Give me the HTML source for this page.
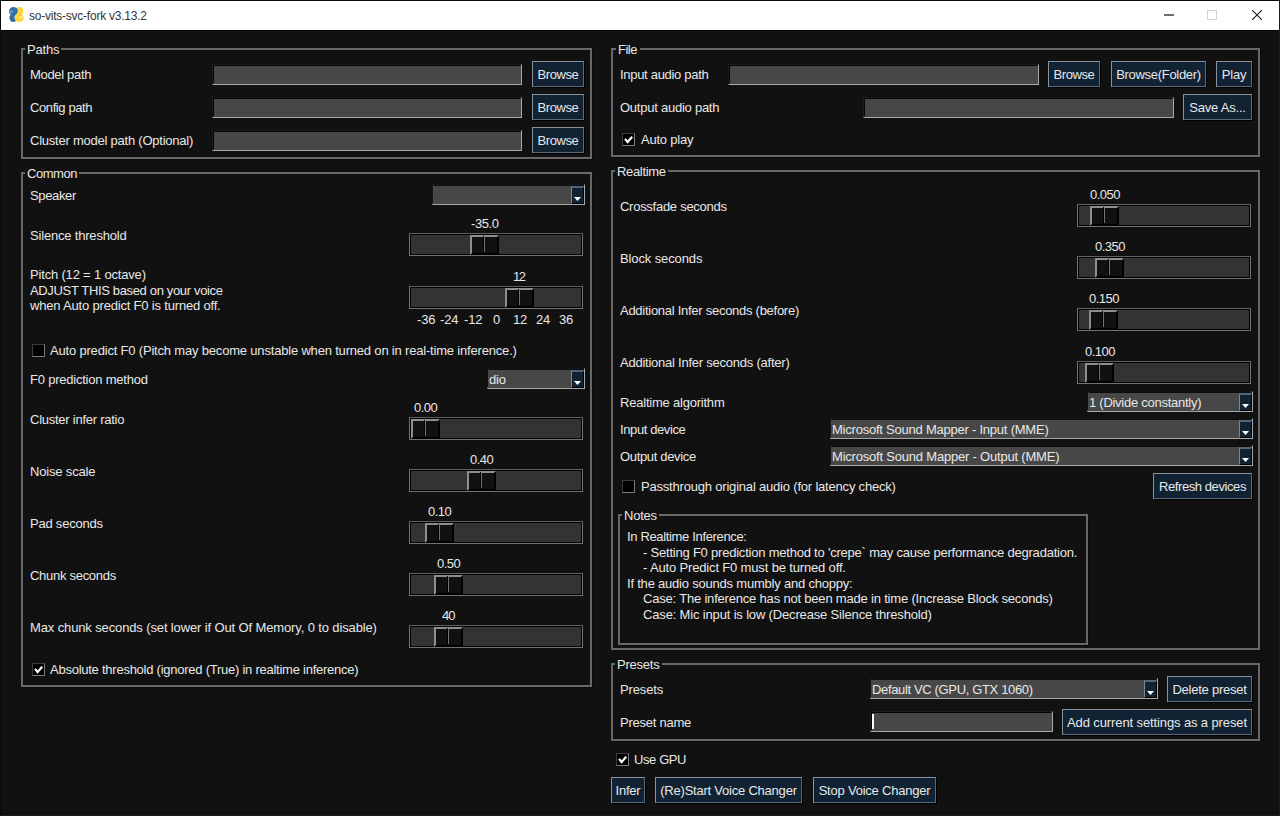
<!DOCTYPE html>
<html lang="en"><head><meta charset="utf-8"><title>so-vits-svc-fork v3.13.2</title>
<style>
html,body{margin:0;padding:0;}
body{width:1280px;height:816px;overflow:hidden;background:#111111;position:relative;
 font-family:"Liberation Sans",sans-serif;font-size:13px;line-height:15px;color:#e8e8e8;letter-spacing:-0.2px;}
#win{position:absolute;left:0;top:0;width:1280px;height:816px;overflow:hidden;background:#111111;}
#win div,#win span{position:absolute;box-sizing:border-box;white-space:pre;}
#tb{left:1px;top:1px;width:1278px;height:29px;background:#ffffff;}
#tbl{left:0;top:30px;width:1280px;height:1px;background:#000;}
#edl{left:0;top:0;width:1px;height:816px;background:#0a0a0a;}
#edt{left:0;top:0;width:1280px;height:1px;background:#0a0a0a;}
#edr{left:1279px;top:0;width:1px;height:816px;background:#1b1b1b;}
#edb{left:0;top:815px;width:1280px;height:1px;background:#1b1b1b;}
#title{left:29px;top:8px;height:16px;line-height:16px;font-size:12px;color:#333;letter-spacing:-0.235px;}
#win span.l{position:static;}
.fr{border:2px solid #686868;box-shadow:1px 1px 0 #0b0b0b;}
.fl{background:#111111;height:15px;line-height:15px;padding:0 2px;}
.fl>span{position:static!important;display:inline-block;}
.t{height:15px;line-height:15px;}
#win span.k{position:static;display:inline-block;}
.in{background:#474747;border-style:solid;border-width:2px;border-color:#1c1c1c #a8a8a8 #a8a8a8 #1c1c1c;}
.in>i{position:absolute;left:-1px;top:-1px;right:-1px;bottom:-1px;border-style:solid;border-width:1px;border-color:#050505 #474747 #474747 #050505;}
.in.co{border-color:#141414 #a8a8a8 #a8a8a8 #141414;border-left-width:1px;}
.in.co>i{border-color:#0d0d0d #474747 #474747 #4a4a4a;left:0;}
.b{background:#112233;border-style:solid;border-width:1px;border-color:#87929d #5b6a79 #5b6a79 #87929d;box-shadow:1px 1px 0 #000;text-align:center;line-height:24px;color:#e8e8e8;}
.cb{width:13px;height:13px;background:#000;border-style:solid;border-width:1px;border-color:#3c3c3c #7c7c7c #7c7c7c #3c3c3c;}
.ar{background:#112233;border-style:solid;border-width:2px 1px 1px 1px;border-color:#56667a #000 #000 #7a8896;}
.tr{background:#333333;border:1px solid #727272;border-top-color:#606060;height:23px;box-shadow:inset 0 0 0 1px #000;}
.tr>u{position:absolute;left:0;top:0;right:0;height:1px;background:#000;}
.tr>s{position:absolute;left:0;top:0;bottom:0;width:1px;background:#000;}
.th{width:29px;height:20px;background:#111;border-style:solid;border-width:2px;border-color:#8e8e8e #000 #000 #8e8e8e;}
.th>b{position:absolute;left:11px;top:-1px;width:1px;height:17px;background:#000;}
.th>em{position:absolute;left:12px;top:0px;width:1px;height:15px;background:#747474;}
</style></head>
<body><div id="win">
<div id="tb"></div><div id="tbl"></div>
<svg style="position:absolute;left:4px;top:3px" width="24" height="24" viewBox="0 0 24 24"><defs><filter id="bl" x="-20%" y="-20%" width="140%" height="140%"><feGaussianBlur stdDeviation="0.45"/></filter></defs><g filter="url(#bl)"><path d="M13.3 4.6C14 4.1 15 3.9 16 3.9C18 3.9 19.3 5.6 19.3 7.8C19.3 9.4 18.8 10.6 18 11.4C19.2 12.2 19.7 13.6 19.7 15C19.7 17.4 17.6 19 15 19C13.6 19 12.5 18.6 11.8 18C11 17 10.4 16 10.4 15C10.3 13.6 11 12.6 12 11.6C13.5 10.2 14.2 8.5 13.7 6.5C13.6 5.8 13.5 5.2 13.3 4.6Z" fill="#ffd642"/><path d="M5 8.6C5 5.6 7 3.9 9.5 3.9C11.5 3.9 13.2 4.6 13.7 6.5C14.2 8.5 13.5 10.2 12 11.6C10.8 12.8 10.2 13.8 10.4 15C10.6 16.2 11.6 17.2 11.8 18C11 18.8 10 19 9.2 19C7 19 5.4 17.2 5.4 14.8C5.4 13.4 6 12.4 6.8 11.7C5.6 11 5 9.9 5 8.6Z" fill="#3370a6"/><ellipse cx="7.2" cy="8.7" rx="1.7" ry="0.9" fill="#8fb4d6"/><ellipse cx="17" cy="14.2" rx="1.7" ry="0.9" fill="#ffe88c"/></g></svg>
<div id="title">so-vits-svc-fork v3.13.2</div>
<div style="left:1164px;top:14px;width:10px;height:2px;background:#6e6e6e"></div>
<div style="left:1207px;top:10px;width:10px;height:10px;border:1px solid #d2d2d2"></div>
<svg style="position:absolute;left:1252px;top:10px" width="10" height="10" viewBox="0 0 10 10"><path d="M0 0L10 10M10 0L0 10" stroke="#1a1a1a" stroke-width="1.1" fill="none"/></svg>
<div class="fr" style="left:21px;top:48px;width:571px;height:111px"></div>
<div class="fl" style="left:25px;top:42px;width:36px;letter-spacing:-0.188px;"><span>Paths</span></div>
<div class="t" style="left:30px;top:67px;letter-spacing:-0.316px;">Model path</div>
<div class="in" style="left:212px;top:64px;width:310px;height:21px"><i></i></div>
<div class="b" style="left:532px;top:61px;width:52px;height:26px;line-height:26px;letter-spacing:-0.422px;"><span class="k">Browse</span></div>
<div class="t" style="left:30px;top:100px;letter-spacing:-0.402px;">Config path</div>
<div class="in" style="left:212px;top:97px;width:310px;height:21px"><i></i></div>
<div class="b" style="left:532px;top:94px;width:52px;height:26px;line-height:26px;letter-spacing:-0.422px;"><span class="k">Browse</span></div>
<div class="t" style="left:30px;top:133px;letter-spacing:-0.23px;">Cluster model path (Optional)</div>
<div class="in" style="left:212px;top:130px;width:310px;height:21px"><i></i></div>
<div class="b" style="left:532px;top:127px;width:52px;height:26px;line-height:26px;letter-spacing:-0.422px;"><span class="k">Browse</span></div>
<div class="fr" style="left:21px;top:172px;width:571px;height:515px"></div>
<div class="fl" style="left:25px;top:166px;width:54px;letter-spacing:-0.45px;"><span>Common</span></div>
<div class="t" style="left:30px;top:188px;letter-spacing:-0.365px;">Speaker</div>
<div class="in co" style="left:432px;top:184px;width:153px;height:21px"><i></i><div class="ar" style="right:-1px;top:0px;width:13px;height:18px"><svg width="7" height="4" style="position:absolute;left:2px;top:9px" viewBox="0 0 7 4"><path d="M0 0H7L3.5 4Z" fill="#fff"/></svg></div></div>
<div class="t" style="left:30px;top:228px;letter-spacing:-0.188px;">Silence threshold</div>
<div class="tr" style="left:409px;top:233px;width:174px"><u></u><s></s><div class="th" style="left:60px;top:1px"><b></b><em></em></div></div>
<div class="t" style="left:471px;top:216px;letter-spacing:-0.41px;">-35.0</div>
<div class="t" style="left:30px;top:267px;height:46.5px;line-height:15.5px"><span class="l" style="letter-spacing:-0.18px;">Pitch (12 = 1 octave)</span>
<span class="l" style="letter-spacing:-0.344px;">ADJUST THIS based on your voice</span>
<span class="l" style="letter-spacing:-0.186px;">when Auto predict F0 is turned off.</span></div>
<div class="tr" style="left:409px;top:286px;width:174px"><u></u><s></s><div class="th" style="left:95px;top:1px"><b></b><em></em></div></div>
<div class="t" style="left:513px;top:269px;letter-spacing:-1.469px;">12</div>
<div class="t" style="left:417px;top:312px;">-36</div>
<div class="t" style="left:440px;top:312px;">-24</div>
<div class="t" style="left:464px;top:312px;">-12</div>
<div class="t" style="left:493px;top:312px;">0</div>
<div class="t" style="left:513px;top:312px;">12</div>
<div class="t" style="left:536px;top:312px;">24</div>
<div class="t" style="left:559px;top:312px;">36</div>
<div class="cb" style="left:32px;top:344px"></div>
<div class="t" style="left:50px;top:343px;letter-spacing:-0.186px;">Auto predict F0 (Pitch may become unstable when turned on in real-time inference.)</div>
<div class="t" style="left:30px;top:372px;letter-spacing:-0.219px;">F0 prediction method</div>
<div class="in co" style="left:487px;top:368px;width:98px;height:21px"><i></i><span style="left:1px;top:1px;height:17px;line-height:17px;">dio</span><div class="ar" style="right:-1px;top:0px;width:13px;height:18px"><svg width="7" height="4" style="position:absolute;left:2px;top:9px" viewBox="0 0 7 4"><path d="M0 0H7L3.5 4Z" fill="#fff"/></svg></div></div>
<div class="t" style="left:30px;top:412px;letter-spacing:-0.25px;">Cluster infer ratio</div>
<div class="tr" style="left:409px;top:417px;width:174px"><u></u><s></s><div class="th" style="left:1px;top:1px"><b></b><em></em></div></div>
<div class="t" style="left:414px;top:400px;letter-spacing:-0.521px;">0.00</div>
<div class="t" style="left:30px;top:464px;letter-spacing:-0.172px;">Noise scale</div>
<div class="tr" style="left:409px;top:469px;width:174px"><u></u><s></s><div class="th" style="left:57px;top:1px"><b></b><em></em></div></div>
<div class="t" style="left:470px;top:452px;letter-spacing:-0.521px;">0.40</div>
<div class="t" style="left:30px;top:516px;letter-spacing:-0.219px;">Pad seconds</div>
<div class="tr" style="left:409px;top:521px;width:174px"><u></u><s></s><div class="th" style="left:15px;top:1px"><b></b><em></em></div></div>
<div class="t" style="left:428px;top:504px;letter-spacing:-0.521px;">0.10</div>
<div class="t" style="left:30px;top:568px;letter-spacing:-0.283px;">Chunk seconds</div>
<div class="tr" style="left:409px;top:573px;width:174px"><u></u><s></s><div class="th" style="left:24px;top:1px"><b></b><em></em></div></div>
<div class="t" style="left:437px;top:556px;letter-spacing:-0.521px;">0.50</div>
<div class="t" style="left:30px;top:620px;letter-spacing:-0.128px;">Max chunk seconds (set lower if Out Of Memory, 0 to disable)</div>
<div class="tr" style="left:409px;top:625px;width:174px"><u></u><s></s><div class="th" style="left:24px;top:1px"><b></b><em></em></div></div>
<div class="t" style="left:442px;top:608px;letter-spacing:-0.969px;">40</div>
<div class="cb" style="left:32px;top:663px"><svg width="11" height="11" style="position:absolute;left:0;top:0" viewBox="0 0 11 11"><path d="M2 4.8L4.6 8L9.2 2.7" stroke="#fff" stroke-width="2.1" fill="none"/></svg></div>
<div class="t" style="left:50px;top:662px;letter-spacing:-0.248px;">Absolute threshold (ignored (True) in realtime inference)</div>
<div class="fr" style="left:611px;top:48px;width:649px;height:109px"></div>
<div class="fl" style="left:616px;top:42px;width:24px;letter-spacing:-0.484px;"><span>File</span></div>
<div class="t" style="left:620px;top:67px;letter-spacing:-0.302px;">Input audio path</div>
<div class="in" style="left:728px;top:64px;width:311px;height:21px"><i></i></div>
<div class="b" style="left:1048px;top:61px;width:52px;height:26px;line-height:26px;letter-spacing:-0.422px;"><span class="k">Browse</span></div>
<div class="b" style="left:1111px;top:61px;width:95px;height:26px;line-height:26px;letter-spacing:-0.298px;"><span class="k">Browse(Folder)</span></div>
<div class="b" style="left:1216px;top:61px;width:36px;height:26px;line-height:26px;letter-spacing:-0.182px;"><span class="k">Play</span></div>
<div class="t" style="left:620px;top:100px;letter-spacing:-0.243px;">Output audio path</div>
<div class="in" style="left:863px;top:97px;width:311px;height:21px"><i></i></div>
<div class="b" style="left:1183px;top:94px;width:69px;height:26px;line-height:26px;letter-spacing:-0.198px;"><span class="k">Save As...</span></div>
<div class="cb" style="left:622px;top:133px"><svg width="11" height="11" style="position:absolute;left:0;top:0" viewBox="0 0 11 11"><path d="M2 4.8L4.6 8L9.2 2.7" stroke="#fff" stroke-width="2.1" fill="none"/></svg></div>
<div class="t" style="left:641px;top:132px;letter-spacing:-0.215px;">Auto play</div>
<div class="fr" style="left:611px;top:170px;width:649px;height:480px"></div>
<div class="fl" style="left:615px;top:164px;width:53px;letter-spacing:-0.33px;"><span>Realtime</span></div>
<div class="t" style="left:620px;top:199px;letter-spacing:-0.27px;">Crossfade seconds</div>
<div class="tr" style="left:1077px;top:204px;width:174px"><u></u><s></s><div class="th" style="left:12px;top:1px"><b></b><em></em></div></div>
<div class="t" style="left:1090px;top:187px;letter-spacing:-0.512px;">0.050</div>
<div class="t" style="left:620px;top:251px;letter-spacing:-0.112px;">Block seconds</div>
<div class="tr" style="left:1077px;top:256px;width:174px"><u></u><s></s><div class="th" style="left:17px;top:1px"><b></b><em></em></div></div>
<div class="t" style="left:1095px;top:239px;letter-spacing:-0.512px;">0.350</div>
<div class="t" style="left:620px;top:303px;letter-spacing:-0.271px;">Additional Infer seconds (before)</div>
<div class="tr" style="left:1077px;top:308px;width:174px"><u></u><s></s><div class="th" style="left:11px;top:1px"><b></b><em></em></div></div>
<div class="t" style="left:1089px;top:291px;letter-spacing:-0.512px;">0.150</div>
<div class="t" style="left:620px;top:355px;letter-spacing:-0.236px;">Additional Infer seconds (after)</div>
<div class="tr" style="left:1077px;top:361px;width:174px"><u></u><s></s><div class="th" style="left:7px;top:1px"><b></b><em></em></div></div>
<div class="t" style="left:1085px;top:344px;letter-spacing:-0.512px;">0.100</div>
<div class="t" style="left:620px;top:395px;letter-spacing:-0.215px;">Realtime algorithm</div>
<div class="in co" style="left:1087px;top:391px;width:166px;height:21px"><i></i><span style="left:1px;top:1px;height:17px;line-height:17px;letter-spacing:-0.265px;">1 (Divide constantly)</span><div class="ar" style="right:-1px;top:0px;width:13px;height:18px"><svg width="7" height="4" style="position:absolute;left:2px;top:9px" viewBox="0 0 7 4"><path d="M0 0H7L3.5 4Z" fill="#fff"/></svg></div></div>
<div class="t" style="left:620px;top:422px;letter-spacing:-0.398px;">Input device</div>
<div class="in co" style="left:830px;top:418px;width:423px;height:21px"><i></i><span style="left:1px;top:1px;height:17px;line-height:17px;letter-spacing:-0.228px;">Microsoft Sound Mapper - Input (MME)</span><div class="ar" style="right:-1px;top:0px;width:13px;height:18px"><svg width="7" height="4" style="position:absolute;left:2px;top:9px" viewBox="0 0 7 4"><path d="M0 0H7L3.5 4Z" fill="#fff"/></svg></div></div>
<div class="t" style="left:620px;top:449px;letter-spacing:-0.332px;">Output device</div>
<div class="in co" style="left:830px;top:445px;width:423px;height:21px"><i></i><span style="left:1px;top:1px;height:17px;line-height:17px;letter-spacing:-0.204px;">Microsoft Sound Mapper - Output (MME)</span><div class="ar" style="right:-1px;top:0px;width:13px;height:18px"><svg width="7" height="4" style="position:absolute;left:2px;top:9px" viewBox="0 0 7 4"><path d="M0 0H7L3.5 4Z" fill="#fff"/></svg></div></div>
<div class="cb" style="left:622px;top:480px"></div>
<div class="t" style="left:641px;top:479px;letter-spacing:-0.196px;">Passthrough original audio (for latency check)</div>
<div class="b" style="left:1153px;top:473px;width:99px;height:26px;line-height:26px;letter-spacing:-0.417px;"><span class="k">Refresh devices</span></div>
<div class="fr" style="left:618px;top:514px;width:470px;height:131px"></div>
<div class="fl" style="left:622px;top:508px;width:37px;letter-spacing:-0.242px;"><span>Notes</span></div>
<div class="t" style="left:627px;top:529px;height:93.0px;line-height:15.5px"><span class="l" style="letter-spacing:-0.343px;">In Realtime Inference:</span>
<span class="l" style="letter-spacing:-0.215px;margin-left:16px;">- Setting F0 prediction method to 'crepe` may cause performance degradation.</span>
<span class="l" style="letter-spacing:-0.156px;margin-left:16px;">- Auto Predict F0 must be turned off.</span>
<span class="l" style="letter-spacing:-0.209px;">If the audio sounds mumbly and choppy:</span>
<span class="l" style="letter-spacing:-0.193px;margin-left:16px;">Case: The inference has not been made in time (Increase Block seconds)</span>
<span class="l" style="letter-spacing:-0.161px;margin-left:16px;">Case: Mic input is low (Decrease Silence threshold)</span></div>
<div class="fr" style="left:611px;top:663px;width:649px;height:78px"></div>
<div class="fl" style="left:615px;top:657px;width:47px;letter-spacing:-0.221px;"><span>Presets</span></div>
<div class="t" style="left:620px;top:682px;letter-spacing:-0.138px;">Presets</div>
<div class="in co" style="left:870px;top:678px;width:288px;height:21px"><i></i><span style="left:1px;top:1px;height:17px;line-height:17px;letter-spacing:-0.352px;">Default VC (GPU, GTX 1060)</span><div class="ar" style="right:-1px;top:0px;width:13px;height:18px"><svg width="7" height="4" style="position:absolute;left:2px;top:9px" viewBox="0 0 7 4"><path d="M0 0H7L3.5 4Z" fill="#fff"/></svg></div></div>
<div class="b" style="left:1167px;top:676px;width:85px;height:26px;line-height:26px;letter-spacing:-0.237px;"><span class="k">Delete preset</span></div>
<div class="t" style="left:620px;top:715px;letter-spacing:-0.247px;">Preset name</div>
<div class="in" style="left:870px;top:711px;width:183px;height:21px"><i></i><div style="left:0px;top:1px;width:2px;height:15px;background:#fff"></div></div>
<div class="b" style="left:1062px;top:709px;width:190px;height:26px;line-height:26px;letter-spacing:-0.115px;"><span class="k">Add current settings as a preset</span></div>
<div class="cb" style="left:616px;top:753px"><svg width="11" height="11" style="position:absolute;left:0;top:0" viewBox="0 0 11 11"><path d="M2 4.8L4.6 8L9.2 2.7" stroke="#fff" stroke-width="2.1" fill="none"/></svg></div>
<div class="t" style="left:634px;top:752px;letter-spacing:-0.401px;">Use GPU</div>
<div class="b" style="left:611px;top:777px;width:34px;height:26px;line-height:26px;"><span class="k">Infer</span></div>
<div class="b" style="left:655px;top:777px;width:147px;height:26px;line-height:26px;letter-spacing:-0.223px;"><span class="k">(Re)Start Voice Changer</span></div>
<div class="b" style="left:813px;top:777px;width:123px;height:26px;line-height:26px;letter-spacing:-0.216px;"><span class="k">Stop Voice Changer</span></div>
<div id="edl"></div><div id="edt"></div><div id="edr"></div><div id="edb"></div>
</div></body></html>
